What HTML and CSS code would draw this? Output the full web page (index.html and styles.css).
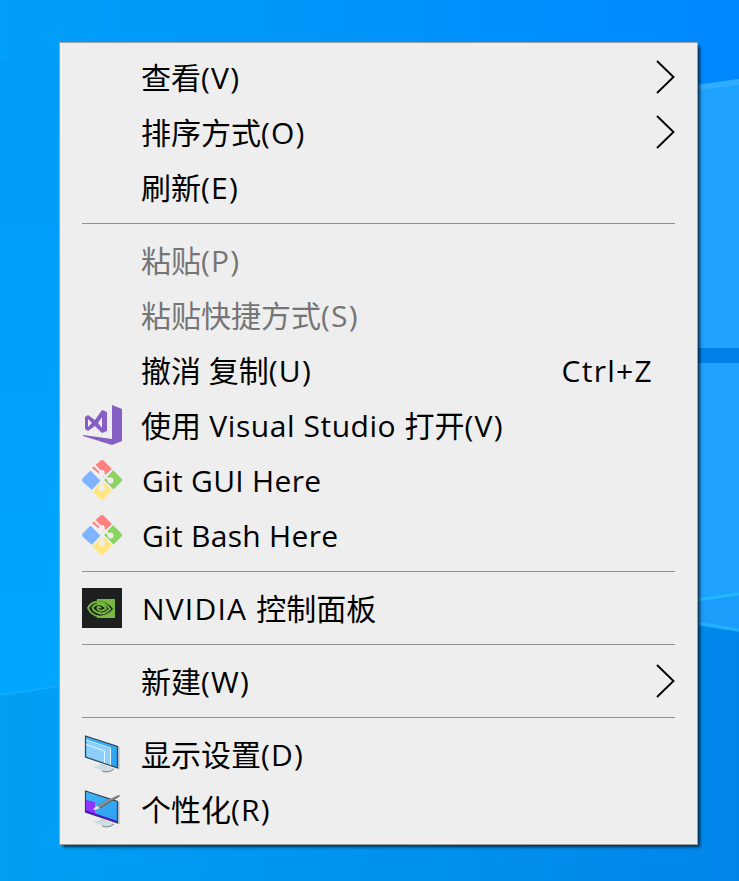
FILE: index.html
```
<!DOCTYPE html>
<html lang="zh-CN">
<head>
    <meta charset="UTF-8">
    <meta name="viewport" content="width=device-width, initial-scale=1.0">
    <title>桌面</title>
    <link rel="stylesheet" href="styles.css">
</head>
<body>
    <div class="desktop">
        <svg class="wallpaper" viewBox="0 0 739 881" aria-hidden="true">
            <defs>
                <linearGradient id="sky" x1="0" y1="0" x2="1" y2="0">
                    <stop offset="0" stop-color="#009ff8"/>
                    <stop offset="0.5" stop-color="#0094fb"/>
                    <stop offset="1" stop-color="#0088ff"/>
                </linearGradient>
                <linearGradient id="left" x1="0" y1="0" x2="0" y2="1">
                    <stop offset="0" stop-color="#009cf8"/>
                    <stop offset="1" stop-color="#00a6ff"/>
                </linearGradient>
                <linearGradient id="ground" x1="0" y1="0" x2="1" y2="0">
                    <stop offset="0" stop-color="#00a0f5"/>
                    <stop offset="0.5" stop-color="#0093ee"/>
                    <stop offset="1" stop-color="#0086ea"/>
                </linearGradient>
            </defs>
            <rect width="739" height="881" fill="url(#sky)"/>
            <path d="M0 60H200V700H0z" fill="url(#left)"/>
            <path d="M0 695L60 686L690 620H739V881H0z" fill="url(#ground)"/>
            <path d="M0 695L60 686" stroke="#16adfc" stroke-width="1.5"/>
            <path d="M690 86L739 79V348H690z" fill="#20a2ff"/>
            <path d="M690 86L739 79V85L690 91z" fill="#2fabff"/>
            <path d="M690 348H739V363H690z" fill="#0080e9"/>
            <path d="M690 363H739V594L690 601z" fill="#1fa3ff"/>
            <path d="M690 601L739 594V632L690 624z" fill="#1c9dfb"/>
            <path d="M690 601L739 594" stroke="#22b8ff" stroke-width="3"/>
            <path d="M690 622L739 630" stroke="#22b0ff" stroke-width="3"/>
        </svg>

        <div class="menu">
            <div class="item">
                <span class="label">查看<span class="key">(V)</span></span>
                <svg class="arrow" viewBox="0 0 20 34"><path d="M1 1L17.5 17L1 33"/></svg>
            </div>
            <div class="item">
                <span class="label">排序方式<span class="key">(O)</span></span>
                <svg class="arrow" viewBox="0 0 20 34"><path d="M1 1L17.5 17L1 33"/></svg>
            </div>
            <div class="item"><span class="label">刷新<span class="key">(E)</span></span></div>
            <div class="separator"></div>
            <div class="item disabled"><span class="label">粘贴<span class="key">(P)</span></span></div>
            <div class="item disabled"><span class="label">粘贴快捷方式<span class="key">(S)</span></span></div>
            <div class="item">
                <span class="label">撤消 复制<span class="key">(U)</span></span>
                <span class="shortcut">Ctrl+Z</span>
            </div>
            <div class="item">
                <svg class="icon" viewBox="0 0 40 40">
                    <path fill="#865fc5" fill-rule="evenodd" d="M30 0L40 4V36L30 40L1 31V30L30 34zM3 12L6 10L13 15L20 5L25 7V26L20 28L13 21L6 26L3 24zM6 14V22L10 18zM20 12L16 18L20 23z"/>
                </svg>
                <span class="label">使用<span class="product"> Visual Studio </span>打开<span class="key">(V)</span></span>
            </div>
            <div class="item">
                <svg class="icon" viewBox="0 0 40 40">
                    <use href="#git"/>
                </svg>
                <span class="label latin">Git GUI Here</span>
            </div>
            <div class="item">
                <svg class="icon" viewBox="0 0 40 40">
                    <g id="git">
                        <path fill="#ff8080" d="M18 1Q20 -1 22 1L30 9L21 17L10 8z"/>
                        <path fill="#80b3ff" d="M9 10L19 20L10 30L1 22Q-1 20 1 18z"/>
                        <path fill="#8dd35f" d="M31 10L39 18Q41 20 39 22L31 30L21 20z"/>
                        <path fill="#ffe680" d="M20 20L30 30L22 39Q20 41 18 39L10 31z"/>
                        <g fill="none" stroke="#eee" stroke-width="2.2">
                            <path d="M12 5L20 13V29M20 13L28 21"/>
                            <path d="M8 9L20 21L31 9M32 31L21 20L9 32" stroke-width="1.6"/>
                        </g>
                        <g fill="#eee">
                            <circle cx="19.8" cy="13" r="2.9"/>
                            <circle cx="28.6" cy="20.4" r="3"/>
                            <circle cx="19.8" cy="28.2" r="3"/>
                        </g>
                    </g>
                </svg>
                <span class="label latin">Git Bash Here</span>
            </div>
            <div class="separator"></div>
            <div class="item">
                <svg class="icon" viewBox="0 0 40 40">
                    <path fill="#1e201f" d="M0 0H40V40H0z"/>
                    <path fill="#76b93f" d="M15 11H33V30H15z"/>
                    <path fill="#1e201f" d="M15 13Q25 13 31 21Q25 28 15 28z"/>
                    <g fill="none" stroke="#76b93f" stroke-width="1.9">
                        <path d="M16 13.5Q9 14 6 20Q9 27 17 28.5"/>
                        <path d="M15 14Q23 14 28 21Q22 27 17 25Q11 23 10.500 19.500Q13 16 17 16Q22 17 24 20.500Q20 24 17 22Q14 20 16.500 18.500L19 20"/>
                    </g>
                </svg>
                <span class="label"><span class="vendor">NVIDIA </span>控制面板</span>
            </div>
            <div class="separator"></div>
            <div class="item">
                <span class="label">新建<span class="key">(W)</span></span>
                <svg class="arrow" viewBox="0 0 20 34"><path d="M1 1L17.5 17L1 33"/></svg>
            </div>
            <div class="separator"></div>
            <div class="item">
                <svg class="icon" viewBox="0 0 40 40">
                    <defs>
                        <linearGradient id="screen" x1="0" y1="0" x2="1" y2="1">
                            <stop offset="0" stop-color="#43b5f7"/>
                            <stop offset="1" stop-color="#2a9df0"/>
                        </linearGradient>
                    </defs>
                    <g id="stand" transform="translate(0 1)">
                        <path fill="#b5bec6" d="M18 29L25 31V34H18z"/>
                        <path fill="#d3dce2" d="M11 32Q16 29 23 31L32 33Q30 37 24 37z"/>
                        <path fill="none" stroke="#75818a" d="M20 36L24 37Q29 37 32 34"/>
                        <path fill="#c9cdd0" d="M35 11L38 12V34L35 34z"/>
                        <path fill="url(#screen)" stroke="#30434f" stroke-width="1.2" d="M3.500 1L35.500 11.500V33L3.500 22z"/>
                    </g>
                    <path fill="#8fcffb" d="M4.500 7L29 15V31L4.500 22.500z"/>
                    <path fill="none" stroke="#e5f6ff" d="M4 6L28.500 14V31M4 10.500L22.500 17V29"/>
                </svg>
                <span class="label">显示设置<span class="key">(D)</span></span>
            </div>
            <div class="item">
                <svg class="icon" viewBox="0 0 40 40">
                    <use href="#stand"/>
                    <path fill="#8b37ff" d="M4 11L13 13V25L4 22.500z"/>
                    <path fill="#5a00cf" d="M4 21.500L13 24.500L35 32V33.500L4 23z"/>
                    <path fill="#e2e5e6" d="M11 21Q13 17 16 17L18 19Q15 21 11 21z"/>
                    <path fill="#8a8d8e" d="M15 16.500L36 6L38 6.500L18 19.500z"/>
                    <path stroke="#54595c" d="M18 19L37.500 7"/>
                </svg>
                <span class="label">个性化<span class="key">(R)</span></span>
            </div>
        </div>
    </div>
</body>
</html>
```

FILE: styles.css
```
* {
    box-sizing: border-box;
}
body {
    margin: 0;
    font-family: "Open Sans", "Noto Sans CJK SC", sans-serif;
    font-size: 30px;
    color: #000;
}
.desktop {
    display: grid;
    width: 739px;
    height: 881px;
    overflow: hidden;
    background: #0094fb;
}
.wallpaper,
.menu {
    grid-area: 1 / 1;
}
.wallpaper {
    display: block;
    width: 739px;
    height: 881px;
}
.menu {
    width: 639px;
    height: 803px;
    margin: 42px 0 0 59px;
    padding: 8px 22px 6px;
    background: #eee;
    border: 1px solid #a0a0a0;
    box-shadow: 3px 3px 3px -1px rgba(0, 0, 0, 0.7);
    z-index: 1;
}
.item {
    display: grid;
    grid-template-columns: 40px 1fr auto;
    column-gap: 19px;
    align-items: center;
    height: 55px;
    line-height: 53px;
    white-space: nowrap;
}
.icon {
    grid-column: 1;
    grid-row: 1;
    width: 40px;
    height: 40px;
    margin-bottom: 3px;
}
.label {
    grid-column: 2;
    grid-row: 1;
    margin-bottom: 2px;
}
.key {
    letter-spacing: 1.2px;
}
.product {
    letter-spacing: 0.55px;
}
.vendor {
    margin-left: 1px;
    letter-spacing: 1.2px;
}
.latin {
    padding-left: 1px;
    letter-spacing: 0.3px;
}
.shortcut {
    grid-column: 3;
    grid-row: 1;
    margin: 0 22px 2px 0;
    letter-spacing: 1.3px;
}
.arrow {
    grid-column: 3;
    grid-row: 1;
    width: 20px;
    height: 34px;
    margin: 0 -1px 3px 0;
    fill: none;
    stroke: #000;
    stroke-width: 1.9;
}
.disabled {
    color: #757575;
}
.separator {
    height: 18px;
    padding-top: 7px;
}
.separator::before {
    content: "";
    display: block;
    height: 1px;
    background: #919191;
}
```
